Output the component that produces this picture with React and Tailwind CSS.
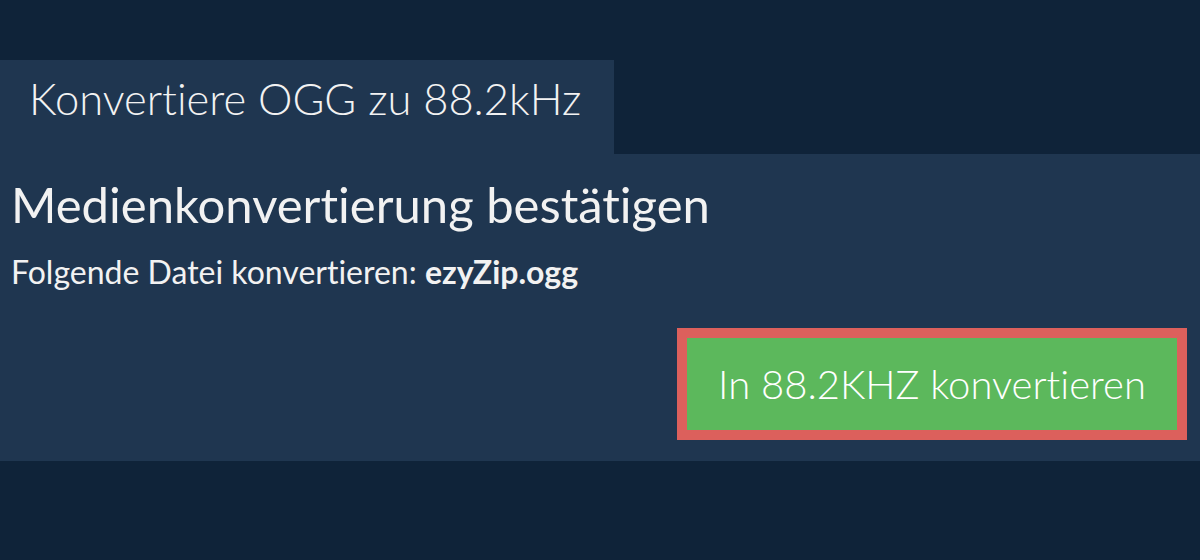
import React from 'react';

const App = () => {
  return (
    <div className="h-[560px] w-[1200px] bg-[#0f2339] pt-[60px] font-['Lato','Noto_Sans',sans-serif] text-[#f2f2f2] [font-variant-ligatures:none]">
      {/* Tab */}
      <div className="flex h-[94px] w-[614px] items-center bg-[#1f3650] pb-[16px] pl-[29px]">
        <h1 className="text-[43.5px] font-light leading-none">Konvertiere OGG zu 88.2kHz</h1>
      </div>

      {/* Panel */}
      <div className="flex h-[307px] flex-col bg-[#1f3650] px-[11px] pt-[22px]">
        <h2 className="text-[49px] leading-[56px]">Medienkonvertierung bestätigen</h2>
        <p className="mt-[20px] text-[32px] leading-[40px]">
          Folgende Datei konvertieren: <span className="font-bold">ezyZip.ogg</span>
        </p>
        <div className="mt-[36px] -mr-[-2px] flex justify-end">
          <button className="flex h-[112px] w-[510px] items-center justify-center border-[10px] border-[#dc605c] bg-[#5cb85c] text-[40px] font-light text-white">
            In 88.2KHZ konvertieren
          </button>
        </div>
      </div>
    </div>
  );
};

export default App;
